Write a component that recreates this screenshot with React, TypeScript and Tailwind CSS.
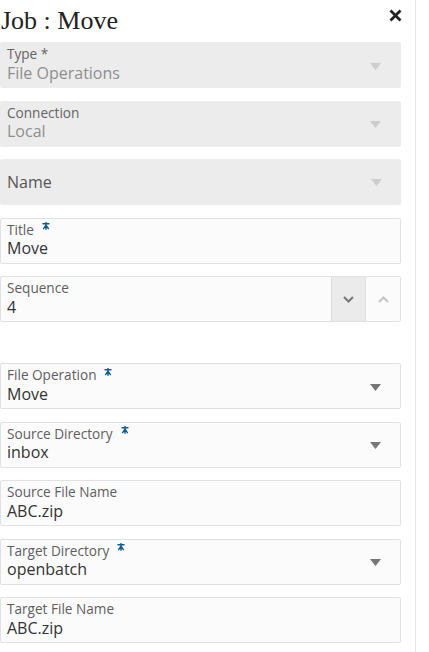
import { ReactNode } from 'react';

const Req = () => (
  <svg
    width="8"
    height="8"
    viewBox="0 0 8 8"
    className="ml-[8px] mt-[-7px] shrink-0"
    fill="none"
    stroke="#0f5a8f"
    strokeWidth="1.4"
    strokeLinecap="round"
  >
    <path d="M1 1.8h6 M4 0.5v6.8 M4 3.2 L1.6 6.6 M4 3.2 L6.4 6.6" />
  </svg>
);

const Caret = ({ light }: { light?: boolean }) => (
  <svg width="11" height="7" viewBox="0 0 11 7" className="shrink-0">
    <path d="M0 0h11L5.5 7z" fill={light ? '#cdcdcd' : '#767676'} />
  </svg>
);

function Field({
  label,
  value,
  required,
  disabled,
  select,
  right,
}: {
  label: string;
  value: string;
  required?: boolean;
  disabled?: boolean;
  select?: boolean;
  right?: ReactNode;
}) {
  return (
    <div
      className={`flex h-[46px] items-stretch rounded-[2px] border ${
        disabled ? 'bg-[#ececed] border-[#ececed]' : 'bg-[#fbfbfc] border-[#e1e1e3]'
      }`}
    >
      <div className="flex-1 min-w-0 pl-[6px] pt-[2px]">
        <div
          className={`flex items-center h-[18px] text-[13.6px] leading-[18px] ${
            disabled ? 'text-[#646464]' : 'text-[#5e5e5e]'
          }`}
        >
          <span>
            {label}
            {disabled && required ? ' *' : ''}
          </span>
          {required && !disabled && <Req />}
        </div>
        <div
          className={`text-[16px] leading-[21px] -mt-[0.5px] ${
            disabled ? 'text-[#8e8e8e]' : 'text-[#333333]'
          }`}
        >
          {value}
        </div>
      </div>
      {select && (
        <div className="flex items-center pr-[19px] pt-[2px]">
          <Caret light={disabled} />
        </div>
      )}
      {right}
    </div>
  );
}

export default function App() {
  return (
    <div
      className="w-[429px] h-[652px] bg-white overflow-hidden"
      style={{ fontFamily: '"Open Sans", "Noto Sans", sans-serif' }}
    >
      <div className="w-[416px] h-full border-r border-[#e6e6e6] pr-[14px]">
        <div className="relative h-[42px] pt-[5px]">
          <h1
            className="text-[26px] leading-[32px] text-[#222222] pl-[1px]"
            style={{ fontFamily: '"Liberation Serif", serif' }}
          >
            Job : Move
          </h1>
          <svg
            width="13"
            height="13"
            viewBox="0 0 13 13"
            className="absolute left-[389px] top-[9px]"
            stroke="#222222"
            strokeWidth="2.8"
          >
            <path d="M1.5 1.5l10 10 M11.5 1.5l-10 10" />
          </svg>
        </div>

        <div className="flex flex-col gap-[12.5px]">
          <Field label="Type" value="File Operations" required disabled select />
          <Field label="Connection" value="Local" disabled select />
          <div className="flex h-[46px] items-center rounded-[2px] bg-[#ececed] pl-[7px] pr-[19px]">
            <span className="flex-1 text-[16px] text-[#555555]">Name</span>
            <Caret light />
          </div>
          <Field label="Title" value="Move" required />
          <Field
            label="Sequence"
            value="4"
            right={
              <div className="flex">
                <div className="w-[34px] flex items-center justify-center bg-[#ebebeb] border-l border-[#dcdcdc]">
                  <svg width="11" height="7" viewBox="0 0 11 7" fill="none" stroke="#777777" strokeWidth="2">
                    <path d="M1 1l4.5 4.5L10 1" />
                  </svg>
                </div>
                <div className="w-[35px] flex items-center justify-center border-l border-[#e1e1e3]">
                  <svg width="11" height="7" viewBox="0 0 11 7" fill="none" stroke="#c4c4c4" strokeWidth="2">
                    <path d="M1 6l4.5-4.5L10 6" />
                  </svg>
                </div>
              </div>
            }
          />
        </div>

        <div className="flex flex-col gap-[12.5px] mt-[41px]">
          <Field label="File Operation" value="Move" required select />
          <Field label="Source Directory" value="inbox" required select />
          <Field label="Source File Name" value="ABC.zip" />
          <Field label="Target Directory" value="openbatch" required select />
          <Field label="Target File Name" value="ABC.zip" />
        </div>
      </div>
    </div>
  );
}
